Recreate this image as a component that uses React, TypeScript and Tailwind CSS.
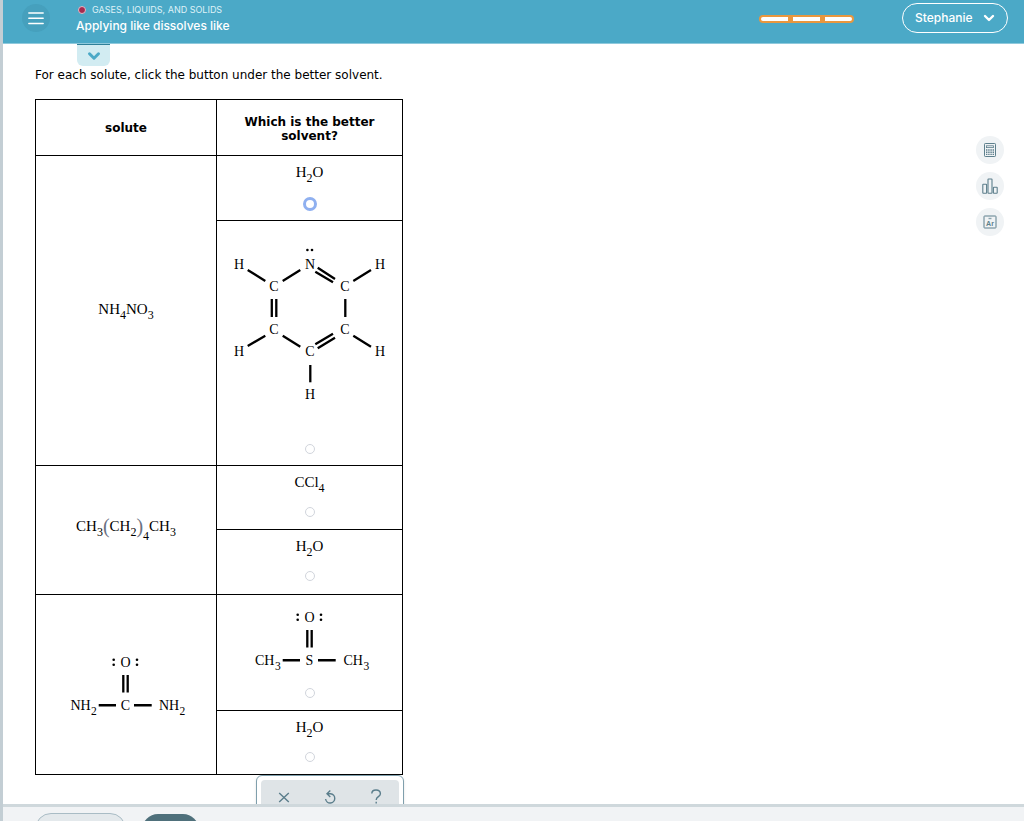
import React, { useState } from 'react'
import { ChevronDown } from 'lucide-react'

const SERIF = "font-['Liberation_Serif',serif]"

// Plain text formula, digits become subscripts
function Formula({ text }: { text: string }) {
    return (
        <span className={`${SERIF} flex h-[18px] items-center text-[15px] leading-[18px]`}>
            {text.split(/(\d)/).map((part, i) =>
                /\d/.test(part)
                    ? <span key={i} className="pt-3 text-xs leading-[18px]">{part}</span>
                    : <span key={i}>{part}</span>
            )}
        </span>
    )
}

function Hexane() {
    return (
        <span className="flex h-[18px] items-center justify-center">
            <Formula text="CH3" />
            <span className={`${SERIF} text-xl leading-[18px] text-gray-500`}>(</span>
            <Formula text="CH2" />
            <span className={`${SERIF} text-xl leading-[18px] text-gray-500`}>)</span>
            <span className={`${SERIF} pt-5 text-xs leading-[18px]`}>4</span>
            <Formula text="CH3" />
        </span>
    )
}

const ringAtoms: [string, number, number][] = [
    ['N', 81, 29],
    ['C', 45, 51],
    ['C', 116, 51],
    ['C', 45, 94],
    ['C', 116, 94],
    ['C', 81, 116],
    ['H', 10, 29],
    ['H', 151, 29],
    ['H', 10, 116],
    ['H', 151, 116],
    ['H', 81, 159]
]

function Pyridine() {
    return (
        <svg width="162" height="164" viewBox="0 0 162 164" role="img" aria-label="pyridine">
            <g className={SERIF} fontSize="14" textAnchor="middle">
                {ringAtoms.map(([label, x, y], i) => <text key={i} x={x} y={y}>{label}</text>)}
            </g>
            <circle cx="78.4" cy="10" r="1.3" />
            <circle cx="83" cy="10" r="1.3" />
            <g stroke="black" strokeWidth="2.3">
                <path d="M18.7 30L36.3 41M53.7 41L71.3 30M86.3 31.7L104 42.3M88.7 27.7L106 39M124.3 41L142 30" />
                <path d="M42.8 59V77M47.3 59V77M116.3 59V77" />
                <path d="M18.7 106L36.3 95.7M53.7 95.7L71.3 106.7M86.3 104.3L104 93.7M88.7 108.3L106 97.7M124.3 95.7L142 106.7" />
                <path d="M81.3 125V142.3" />
            </g>
        </svg>
    )
}

// O double-bonded to a central atom with the same group on both sides
function Carbonyl({ center, group, sub, name }: { center: string; group: string; sub: string; name: string }) {
    const width = group === 'NH' ? 20.5 : 20
    return (
        <svg width="122" height="64" viewBox="0 0 122 64" role="img" aria-label={name}>
            <g className={SERIF} fontSize="14">
                <text x="60.5" y="14" textAnchor="middle">O</text>
                <text x="60.5" y="57" textAnchor="middle">{center}</text>
                <text x={26 - width} y="57">{group}</text>
                <text x="26" y="62" fontSize="11.5">{sub}</text>
                <text x={114.5 - width} y="57">{group}</text>
                <text x="114.5" y="62" fontSize="11.5">{sub}</text>
            </g>
            <circle cx="48.7" cy="6.7" r="1.3" />
            <circle cx="48.7" cy="11.7" r="1.3" />
            <circle cx="72" cy="6.7" r="1.3" />
            <circle cx="72" cy="11.7" r="1.3" />
            <path d="M58.3 22V39.4M62.7 22V39.4" stroke="black" strokeWidth="2.3" />
            <path d="M33.7 52.3H51M69 52.3H86.7" stroke="black" strokeWidth="2.6" />
        </svg>
    )
}

interface ChoiceProps {
    name: string
    label: string
    className: string
    highlighted?: boolean
    children: React.ReactNode
}

function Choice({ name, label, className, highlighted, children }: ChoiceProps) {
    return (
        <td className={`border border-black p-0 align-top ${className}`}>
            <label className="flex flex-col items-center pt-[7px]">
                {children}
                <input
                    type="radio"
                    name={name}
                    aria-label={label}
                    className={`mt-4 appearance-none rounded-full bg-white checked:bg-gray-500 ${highlighted ? 'size-3.5 border-[3px] border-[#8fb0f0]' : 'my-px size-2.5 border border-gray-300'}`}
                />
            </label>
        </td>
    )
}

function CalculatorIcon() {
    return (
        <svg width="14" height="16" viewBox="0 0 14 16" fill="none" stroke="#5d7f8c">
            <rect x="1.5" y="1.5" width="11" height="13" rx="0.8" />
            <rect x="3.5" y="3.8" width="7" height="1.8" strokeWidth="0.8" />
            <path d="M3 8H11M3 10.2H11M3 12.4H11" strokeWidth="1.4" strokeDasharray="1.4 0.8" />
        </svg>
    )
}

function BarsIcon() {
    return (
        <svg width="16" height="16" viewBox="0 0 16 16" fill="none" stroke="#5d7f8c" strokeWidth="1.1">
            <rect x="0.8" y="6.2" width="3.8" height="9" rx="0.5" />
            <rect x="6" y="1" width="4" height="14.2" rx="0.5" />
            <rect x="11.4" y="9.2" width="3.8" height="6" rx="0.5" />
        </svg>
    )
}

function ElementIcon() {
    return (
        <svg width="14" height="14" viewBox="0 0 14 14">
            <rect x="1" y="1" width="12" height="12" rx="0.6" fill="none" stroke="#5d7f8c" />
            <path d="M5.5 3.5H8.5" stroke="#8aa3ad" strokeWidth="1.4" />
            <text x="7" y="11" fontSize="7" fontWeight="700" textAnchor="middle" fill="#5d7f8c" className="font-['Liberation_Sans',sans-serif]">Ar</text>
        </svg>
    )
}

const sideTools = [
    { label: 'Calculator', icon: <CalculatorIcon /> },
    { label: 'Data', icon: <BarsIcon /> },
    { label: 'Periodic table', icon: <ElementIcon /> }
]

const answerTools = [
    { label: 'Clear', path: 'M3.2 4L12.8 13M12.8 4L3.2 13' },
    { label: 'Undo', path: 'M8.3 1.5L5 4.8L8.3 8M5.3 4.8H8.6A4.6 4.6 0 1 1 3.6 10' },
    { label: 'Help', path: 'M3.8 4.6C3.8 2.4 5.6 1 8 1S12.4 2.5 12.4 4.8C12.4 7.8 8.2 7.6 8.2 11M8.2 12.8V14.6' }
]

export default function App() {
    const [menuOpen, setMenuOpen] = useState(false)

    return (
        <div className="flex h-screen flex-col overflow-hidden border-l-[3px] border-[#c3ced4] bg-white text-black">
            {/* Header */}
            <header className="flex h-11 shrink-0 items-start border-b border-[#8fc9dc] bg-[#4ba9c7] pr-4 pl-[19px] font-['Inter',sans-serif] text-white">
                <button aria-label="Menu" className="mt-1 flex size-7 items-center justify-center rounded-full bg-[#46a0bd]">
                    <svg width="16" height="14" viewBox="0 0 16 14" stroke="white" strokeWidth="1.4" strokeLinecap="round">
                        <path d="M0.8 2H15.2M0.8 7.3H15.2M0.8 12.5H15.2" />
                    </svg>
                </button>
                <div className="ml-[26px] flex-1 pt-1">
                    <div className="flex items-center gap-1.5 pl-0.5 text-[9px] leading-3 text-[#dff2f7]">
                        <span className="size-2 rounded-full border border-[#e5b9c6] bg-[#a52a4f]" />
                        GASES, LIQUIDS, AND SOLIDS
                    </div>
                    <h1 className="mt-0.5 text-xs leading-4 font-medium">Applying like dissolves like</h1>
                </div>
                <div className="mt-[15px] mr-12 flex h-2 w-[95px] gap-[5px] rounded-full bg-[#e9973e] p-0.5">
                    <span className="flex-1 rounded-l-full bg-white" />
                    <span className="flex-1 bg-white" />
                    <span className="flex-1 rounded-r-full bg-white" />
                </div>
                <button
                    onClick={() => setMenuOpen(!menuOpen)}
                    aria-expanded={menuOpen}
                    className="mt-[3px] flex h-[30px] w-[106px] items-center justify-between rounded-full border border-white pr-2.5 pl-3 text-xs font-medium"
                >
                    Stephanie
                    <ChevronDown size={16} strokeWidth={3.6} />
                </button>
            </header>

            <main className="flex min-h-0 flex-1 items-start justify-between overflow-hidden">
                <div className="ml-8 font-['DejaVu_Sans',sans-serif]">
                    <button aria-label="Expand" className="ml-[42px] flex h-[22px] w-[33px] items-center justify-center rounded-b-md border-t border-[#2f8099] bg-[#d2ecf2] text-[#4ba9c7]">
                        <ChevronDown size={18} strokeWidth={4} />
                    </button>
                    <p className="text-xs leading-[18px]">For each solute, click the button under the better solvent.</p>

                    <table className="mt-[15px] w-[368px] table-fixed border-collapse border border-black">
                        <thead>
                            <tr className="h-14 text-xs leading-[14px]">
                                <th className="w-[181px] border border-black p-0">solute</th>
                                <th className="border border-black px-6 pt-0.5 pb-0">Which is the better solvent?</th>
                            </tr>
                        </thead>
                        <tbody>
                            <tr>
                                <td rowSpan={2} className="border border-black p-0 pb-1">
                                    <div className="flex justify-center"><Formula text="NH4NO3" /></div>
                                </td>
                                <Choice name="nitrate" label="H2O" className="h-[65px]" highlighted><Formula text="H2O" /></Choice>
                            </tr>
                            <tr>
                                <Choice name="nitrate" label="Pyridine" className="h-[245px]">
                                    <div className="pt-3 pb-6"><Pyridine /></div>
                                </Choice>
                            </tr>
                            <tr>
                                <td rowSpan={2} className="border border-black p-0 pb-2">
                                    <Hexane />
                                </td>
                                <Choice name="hexane" label="CCl4" className="h-16"><Formula text="CCl4" /></Choice>
                            </tr>
                            <tr>
                                <Choice name="hexane" label="H2O" className="h-[65px]"><Formula text="H2O" /></Choice>
                            </tr>
                            <tr>
                                <td rowSpan={2} className="border border-black p-0">
                                    <div className="flex justify-center"><Carbonyl center="C" group="NH" sub="2" name="urea" /></div>
                                </td>
                                <Choice name="urea" label="Dimethyl sulfoxide" className="h-[116px]">
                                    <div className="pt-1.5"><Carbonyl center="S" group="CH" sub="3" name="dimethyl sulfoxide" /></div>
                                </Choice>
                            </tr>
                            <tr>
                                <Choice name="urea" label="H2O" className="h-16"><Formula text="H2O" /></Choice>
                            </tr>
                        </tbody>
                    </table>

                    {/* Answer toolbar */}
                    <div className="ml-[221px] w-[148px] rounded-md border border-[#7f9fac] p-1 shadow-sm">
                        <div className="flex h-10 items-start justify-around rounded-sm bg-[#dfe4e7] pt-[9px]">
                            {answerTools.map(tool => (
                                <button key={tool.label} aria-label={tool.label}>
                                    <svg width="16" height="16" viewBox="0 0 16 16" fill="none" stroke="#5a7d8b" strokeWidth="1.4">
                                        <path d={tool.path} />
                                    </svg>
                                </button>
                            ))}
                        </div>
                    </div>
                </div>

                {/* Side tools */}
                <aside className="mt-[92px] mr-5 flex flex-col gap-2">
                    {sideTools.map(tool => (
                        <button key={tool.label} aria-label={tool.label} className="flex size-7 items-center justify-center rounded-full bg-[#f0f3f5]">
                            {tool.icon}
                        </button>
                    ))}
                </aside>
            </main>

            {/* Footer */}
            <footer className="flex h-[17px] shrink-0 items-start gap-4 overflow-hidden border-t-[3px] border-[#cfd8dc] bg-[#f1f3f5] pt-1.5 pl-8">
                <button aria-label="Explanation" className="h-8 w-[91px] shrink-0 rounded-full border border-[#a9bcc5] bg-[#e4e9ec]" />
                <button aria-label="Check" className="mt-px h-8 w-[57px] shrink-0 rounded-full bg-[#4f707b]" />
            </footer>
        </div>
    )
}
